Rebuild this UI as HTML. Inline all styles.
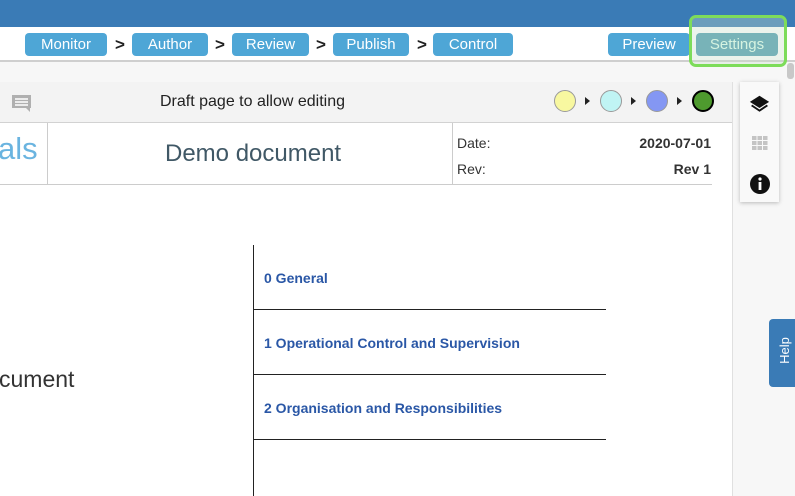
<!DOCTYPE html>
<html><head><style>
*{margin:0;padding:0;box-sizing:border-box}
body{width:795px;height:496px;overflow:hidden;position:relative;background:#f7f7f7;font-family:"Liberation Sans",sans-serif}
.abs{position:absolute}
.top{left:0;top:0;width:795px;height:27px;background:#3a7bb6}
.nav{left:0;top:27px;width:795px;height:35px;background:#fff;border-bottom:2px solid #cfcfcf}
.btn{position:absolute;top:6px;height:23px;background:#4ea6d6;color:#fff;border-radius:4px;font-size:15px;text-align:center;line-height:23px}
.chev{position:absolute;top:6px;font-size:17px;font-weight:bold;color:#222;line-height:23px}
.tool{left:0;top:82px;width:732px;height:41px;background:#f3f3f3;border-bottom:1px solid #d2d2d2}
.doc{left:0;top:123px;width:732px;height:373px;background:#fff}
.circ{position:absolute;top:90px;width:22px;height:22px;border-radius:50%;border:1px solid #999}
.tri{position:absolute;top:97px;width:0;height:0;border-top:4px solid transparent;border-bottom:4px solid transparent;border-left:5px solid #222}
.sec{position:absolute;left:264px;font-size:14px;font-weight:bold;color:#2a57a6}
.hl{position:absolute;left:253px;width:353px;height:1px;background:#222}
</style></head><body>
<div class="abs top"></div>
<div class="abs nav">
 <div class="btn" style="left:25px;width:82px">Monitor</div>
 <div class="chev" style="left:115px">&gt;</div>
 <div class="btn" style="left:132px;width:76px">Author</div>
 <div class="chev" style="left:215px">&gt;</div>
 <div class="btn" style="left:232px;width:77px">Review</div>
 <div class="chev" style="left:316px">&gt;</div>
 <div class="btn" style="left:333px;width:76px">Publish</div>
 <div class="chev" style="left:417px">&gt;</div>
 <div class="btn" style="left:433px;width:80px">Control</div>
 <div class="btn" style="left:608px;width:82px">Preview</div>
 <div class="btn" style="left:696px;width:82px;background:#4e9db0;color:#dfe">Settings</div>
</div>
<div class="abs" style="left:689px;top:15px;width:98px;height:52px;border:3px solid #7ddc5a;border-radius:7px;background:rgba(200,220,200,0.35)"></div>
<div class="abs" style="left:787px;top:63px;width:7px;height:16px;background:#c8c8c8;border-radius:3px"></div>
<div class="abs tool">
 <svg class="abs" style="left:11px;top:12px" width="22" height="20" viewBox="0 0 22 20"><path d="M1 1h19v13h-1v4l-4-4H1z" fill="#b0b0b0"/><path d="M4 5h13M4 8h13M4 11h13" stroke="#fff" stroke-width="1.5"/></svg>
 <div class="abs" style="left:160px;top:11px;font-size:16px;color:#222">Draft page to allow editing</div>
</div>
<div class="circ" style="left:554px;background:#f8f8a0"></div>
<div class="tri" style="left:585px"></div>
<div class="circ" style="left:600px;background:#c0f4f4"></div>
<div class="tri" style="left:631px"></div>
<div class="circ" style="left:646px;background:#8497f3"></div>
<div class="tri" style="left:677px"></div>
<div class="circ" style="left:692px;background:#4e9a2e;border:2px solid #000"></div>
<div class="abs doc"></div>
<div class="abs" style="left:0;top:184px;width:712px;height:1px;background:#ccc"></div>
<div class="abs" style="left:47px;top:123px;width:1px;height:61px;background:#ccc"></div>
<div class="abs" style="left:452px;top:123px;width:1px;height:61px;background:#ccc"></div>
<div class="abs" style="left:-2px;top:131px;font-size:31px;color:#6ab4e0">als</div>
<div class="abs" style="left:165px;top:140px;font-size:24px;color:#405866">Demo document</div>
<div class="abs" style="left:457px;top:135px;font-size:14px;color:#333">Date:</div>
<div class="abs" style="left:457px;top:161px;font-size:14px;color:#333">Rev:</div>
<div class="abs" style="left:620px;top:135px;width:91px;text-align:right;font-size:14px;font-weight:bold;color:#333">2020-07-01</div>
<div class="abs" style="left:620px;top:161px;width:91px;text-align:right;font-size:14px;font-weight:bold;color:#333">Rev 1</div>
<div class="abs" style="left:253px;top:245px;width:1px;height:251px;background:#222"></div>
<div class="hl" style="top:309px"></div>
<div class="hl" style="top:374px"></div>
<div class="hl" style="top:439px"></div>
<div class="sec" style="top:270px">0 General</div>
<div class="sec" style="top:335px">1 Operational Control and Supervision</div>
<div class="sec" style="top:400px">2 Organisation and Responsibilities</div>
<div class="abs" style="left:-1px;top:366px;font-size:23px;color:#333">cument</div>
<div class="abs" style="left:732px;top:82px;width:1px;height:414px;background:#e0e0e0"></div>
<div class="abs" style="left:740px;top:82px;width:39px;height:120px;background:#f9f9f9;box-shadow:0 1px 4px rgba(0,0,0,0.25)">
 <svg class="abs" style="left:9px;top:12px" width="21" height="21" viewBox="0 0 24 24"><path d="M12 2L1 9l11 7 11-7z" fill="#111"/><path d="M3 13l9 6 9-6" stroke="#111" stroke-width="2.2" fill="none"/></svg>
 <svg class="abs" style="left:12px;top:54px" width="16" height="14" viewBox="0 0 16 14"><g fill="#c4c4c4"><rect x="0" y="0" width="4.5" height="4"/><rect x="5.5" y="0" width="4.5" height="4"/><rect x="11" y="0" width="4.5" height="4"/><rect x="0" y="5" width="4.5" height="4"/><rect x="5.5" y="5" width="4.5" height="4"/><rect x="11" y="5" width="4.5" height="4"/><rect x="0" y="10" width="4.5" height="4"/><rect x="5.5" y="10" width="4.5" height="4"/><rect x="11" y="10" width="4.5" height="4"/></g></svg>
 <svg class="abs" style="left:10px;top:92px" width="20" height="20" viewBox="0 0 20 20"><circle cx="10" cy="10" r="10" fill="#111"/><rect x="8.6" y="8" width="2.8" height="8" fill="#fff"/><circle cx="10" cy="5" r="1.6" fill="#fff"/></svg>
</div>
<div class="abs" style="left:769px;top:319px;width:28px;height:68px;background:#3a7bb6;border-radius:4px 0 0 4px">
 <div class="abs" style="left:2px;top:24px;color:#fff;font-size:13px;transform:rotate(-90deg);transform-origin:center">Help</div>
</div>
</body></html>
